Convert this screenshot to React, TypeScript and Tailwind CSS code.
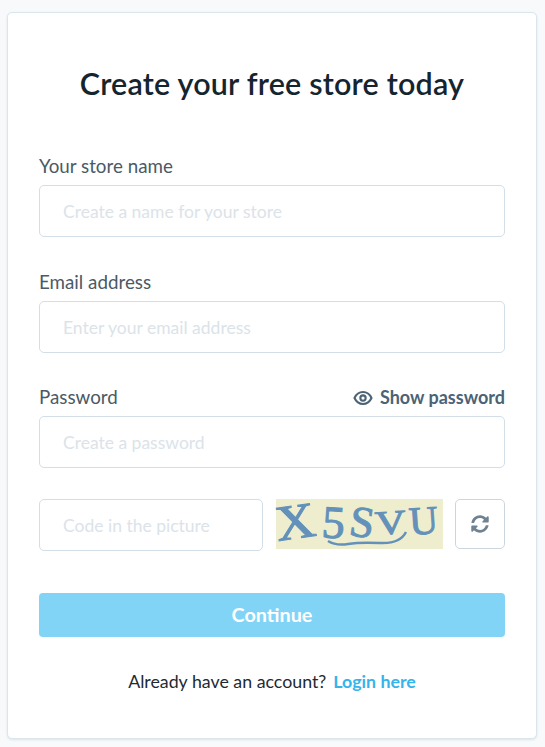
import { FaSyncAlt } from "react-icons/fa";

function Field({ label, placeholder, right }: { label: string; placeholder: string; right?: React.ReactNode }) {
  return (
    <div>
      <div className="flex items-center justify-between h-[23px] mb-[7px]">
        <label className="text-[18.8px] text-[#4a5a66]">{label}</label>
        {right}
      </div>
      <input
        placeholder={placeholder}
        className="block w-full h-[52px] px-[23px] text-[17.5px] rounded-[5px] border border-[#d2dfe8] bg-white outline-none placeholder:text-[#dbe3e9]"
      />
    </div>
  );
}

function EyeIcon() {
  return (
    <svg width="20" height="20" viewBox="0 0 24 24" fill="none" stroke="currentColor" strokeWidth="2.5">
      <path d="M1.8 12C4 7.2 7.8 4.8 12 4.8S20 7.2 22.2 12C20 16.8 16.2 19.2 12 19.2S4 16.8 1.8 12Z" />
      <circle cx="12" cy="12" r="3.2" />
    </svg>
  );
}

function Captcha() {
  return (
    <svg width="167" height="50" viewBox="0 0 167 50" className="block shrink-0 overflow-visible">
      <rect width="167" height="50" fill="#eeeecf" />
      <g fill="#6391b9" stroke="#6391b9" strokeWidth="1" fontFamily="'Liberation Serif', serif">
        <text fontSize="50" transform="translate(2 42) rotate(-8) scale(1.1 1)">X</text>
        <text fontSize="46" transform="translate(45 38) rotate(4)">5</text>
        <text fontSize="44" transform="translate(72 36) rotate(8)">S</text>
        <text fontSize="34" transform="translate(100 36) rotate(-4) scale(1.25 1)">V</text>
        <text fontSize="40" transform="translate(134 36) rotate(-4)">U</text>
      </g>
      <path d="M52 42 Q 60 47 72 45 T 104 44 T 130 33" fill="none" stroke="#6391b9" strokeWidth="2.5" />
    </svg>
  );
}

export default function App() {
  return (
    <div className="min-h-[747px] bg-[#f7f9fb] pt-[12px] pl-[7px] pr-[8px] font-['Lato','Liberation_Sans',sans-serif]">
      <div className="h-[727px] bg-white rounded-[5px] border border-[#dbe6ec] shadow-[0_1px_2px_rgba(180,200,215,0.4)] pt-[50px] px-[31px]">
        <h1 className="text-[30.5px] leading-[40px] font-semibold text-center text-[#15252f] tracking-[0.2px] mb-[52px]">
          Create your free store today
        </h1>
        <div className="flex flex-col">
          <Field label="Your store name" placeholder="Create a name for your store" />
          <div className="mt-[34px]">
            <Field label="Email address" placeholder="Enter your email address" />
          </div>
          <div className="mt-[33px]">
            <Field
              label="Password"
              placeholder="Create a password"
              right={
                <button className="flex items-center gap-[7px] text-[18px] font-bold text-[#4b6375]">
                  <EyeIcon />
                  Show password
                </button>
              }
            />
          </div>
        </div>
        <div className="flex items-start mt-[31px]">
          <input
            placeholder="Code in the picture"
            className="block w-[224px] h-[52px] px-[23px] text-[17.5px] rounded-[5px] border border-[#d2dfe8] outline-none placeholder:text-[#dbe3e9]"
          />
          <div className="ml-[13px]">
            <Captcha />
          </div>
          <button className="ml-[12px] w-[50px] h-[50px] flex items-center justify-center rounded-[5px] border border-[#ccd6de] text-[#6f8291]">
            <FaSyncAlt size={18} />
          </button>
        </div>
        <button className="block w-full h-[44px] mt-[42px] rounded-[4px] bg-[#82d4f6] text-white text-[19.8px] font-bold">
          Continue
        </button>
        <p className="mt-[33px] text-center text-[17.8px] leading-[22px] text-[#1e2a33]">
          Already have an account?
          <a className="ml-[7px] font-bold text-[#36b4ea]">Login here</a>
        </p>
      </div>
    </div>
  );
}
